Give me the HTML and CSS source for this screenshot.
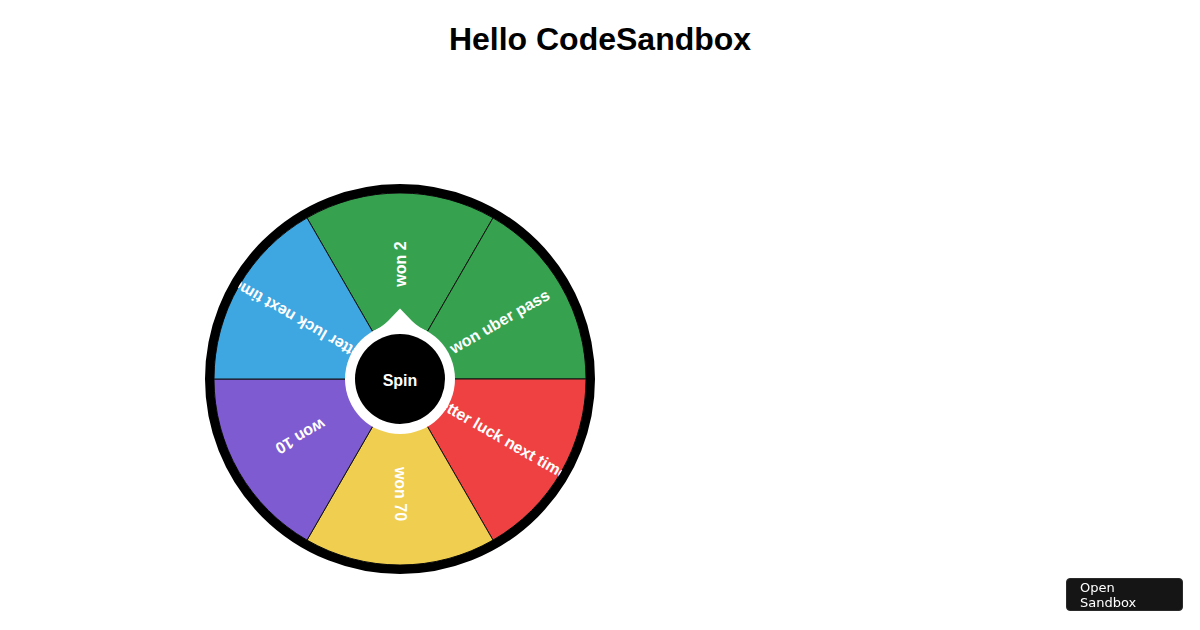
FILE: index.html
```html
<!DOCTYPE html>
<html>
<head>
<meta charset="utf-8">
<link rel="stylesheet" href="styles.css">
</head>
<body>
<div class="app">
  <h1 class="title">Hello CodeSandbox</h1>
  <div class="stage">
    <svg class="wheel" width="400" height="400" viewBox="-200 -200 400 400">
      <g class="segments" stroke="#111" stroke-width="1">
        <path d="M0 0 L-93 -161.08 A186 186 0 0 1 93 -161.08 Z" fill="#36a24f"/>
        <path d="M0 0 L93 -161.08 A186 186 0 0 1 186 0 Z" fill="#36a24f"/>
        <path d="M0 0 L186 0 A186 186 0 0 1 93 161.08 Z" fill="#ef4042"/>
        <path d="M0 0 L93 161.08 A186 186 0 0 1 -93 161.08 Z" fill="#f0ce50"/>
        <path d="M0 0 L-93 161.08 A186 186 0 0 1 -186 0 Z" fill="#7e5bd0"/>
        <path d="M0 0 L-186 0 A186 186 0 0 1 -93 -161.08 Z" fill="#3ea6e0"/>
      </g>
      <g class="labels">
        <text transform="rotate(-90) translate(115 0)">won 2</text>
        <text transform="rotate(-30) translate(115 0)">won uber pass</text>
        <text transform="rotate(30) translate(115 0)">better luck next time</text>
        <text transform="rotate(90) translate(115 0)">won 70</text>
        <text transform="rotate(150) translate(115 0)">won 10</text>
        <text transform="rotate(-150) translate(115 0)">better luck next time</text>
      </g>
      <circle cx="0" cy="0" r="190.5" fill="none" stroke="#000" stroke-width="9"/>
      <g class="spin">
        <path d="M-28 -47.3 Q-18 -52 -12 -58 L0 -70.5 L12 -58 Q18 -52 28 -47.3 Z" fill="#fff"/>
        <circle cx="0" cy="0" r="55" fill="#fff"/>
        <circle cx="0" cy="0" r="45" fill="#000"/>
        <text class="spin-label" x="0" y="1">Spin</text>
      </g>
    </svg>
  </div>
</div>
<div class="open-sandbox">Open Sandbox</div>
</body>
</html>
```
FILE: styles.css
```css
html, body {
  margin: 0;
  padding: 0;
  background: #fff;
}
.app {
  font-family: "Liberation Sans", Arial, sans-serif;
}
.title {
  margin: 21px 0;
  font-size: 32px;
  line-height: 37px;
  font-weight: bold;
  text-align: center;
  color: #000;
}
.stage {
  display: flex;
  padding: 100px 0 0 200px;
}
.wheel {
  display: block;
}
.labels text {
  font-family: "Liberation Sans", Arial, sans-serif;
  font-weight: bold;
  font-size: 16px;
  fill: #fff;
  text-anchor: middle;
  dominant-baseline: central;
}
.spin-label {
  font-family: "Liberation Sans", Arial, sans-serif;
  font-weight: bold;
  font-size: 16px;
  fill: #fff;
  text-anchor: middle;
  dominant-baseline: central;
}
.open-sandbox {
  position: fixed;
  right: 17px;
  bottom: 19px;
  width: 117px;
  height: 33px;
  box-sizing: border-box;
  padding: 1px 40px 0 13px;
  background: #151515;
  border: 1px solid #2a2a2a;
  border-radius: 4px;
  color: #fff;
  font-family: "DejaVu Sans", sans-serif;
  font-size: 13px;
  line-height: 15px;
}
```
